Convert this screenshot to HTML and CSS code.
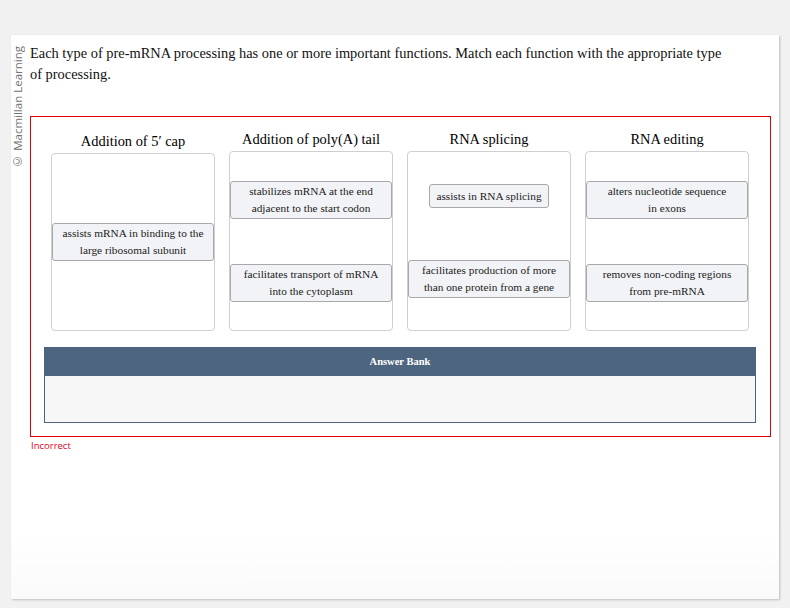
FILE: index.html
```html
<!DOCTYPE html>
<html lang="en">
<head>
<meta charset="utf-8">
<title>Pre-mRNA processing</title>
<link rel="stylesheet" href="styles.css">
</head>
<body>
<div class="page">
  <div class="panel">
    <div class="side"><span class="credit">© Macmillan Learning</span></div>
    <div class="main">
      <p class="question">Each type of pre-mRNA processing has one or more important functions. Match each function with the appropriate type of processing.</p>
      <div class="answer-area">
        <div class="cols">
          <div class="col">
            <div class="col-title col-title--tall">Addition of 5′ cap</div>
            <div class="box">
              <div class="card">assists mRNA in binding to the<br>large ribosomal subunit</div>
            </div>
          </div>
          <div class="col">
            <div class="col-title">Addition of poly(A) tail</div>
            <div class="box box--two">
              <div class="card">stabilizes mRNA at the end<br>adjacent to the start codon</div>
              <div class="card">facilitates transport of mRNA<br>into the cytoplasm</div>
            </div>
          </div>
          <div class="col">
            <div class="col-title">RNA splicing</div>
            <div class="box box--wide">
              <div class="card card--fit">assists in RNA splicing</div>
              <div class="card">facilitates production of more<br>than one protein from a gene</div>
            </div>
          </div>
          <div class="col">
            <div class="col-title">RNA editing</div>
            <div class="box box--two">
              <div class="card">alters nucleotide sequence<br>in exons</div>
              <div class="card">removes non-coding regions<br>from pre-mRNA</div>
            </div>
          </div>
        </div>
        <div class="bank">
          <div class="bank-head">Answer Bank</div>
          <div class="bank-body"></div>
        </div>
      </div>
      <div class="status">Incorrect</div>
    </div>
  </div>
</div>
</body>
</html>
```
FILE: styles.css
```css
html, body {
  margin: 0;
  padding: 0;
}
body {
  background: #f1f1f1;
  width: 790px;
  height: 608px;
  overflow: hidden;
}
.page {
  padding: 35px 11px 0 11px;
}
.panel {
  display: flex;
  height: 564px;
  background: linear-gradient(to bottom, #ffffff 88%, #fafafa 100%);
  box-shadow: 1px 1px 2px rgba(0, 0, 0, 0.22);
}
.side {
  width: 19px;
  flex: none;
  display: flex;
  flex-direction: column;
  align-items: flex-start;
}
.credit {
  writing-mode: vertical-rl;
  transform: rotate(180deg);
  font-family: "Open Sans", "DejaVu Sans", sans-serif;
  font-size: 11.5px;
  line-height: 12px;
  color: #707070;
  margin-top: 11px;
  margin-left: 1px;
  white-space: nowrap;
}
.main {
  flex: 1;
  padding-right: 8px;
  font-family: "Liberation Serif", "Times New Roman", serif;
  color: #111;
}
.question {
  margin: 8px 0 0 0;
  font-size: 14.4px;
  line-height: 21px;
  width: 700px;
}
.answer-area {
  margin-top: 31px;
  border: 1px solid #e30000;
  padding: 12px 14px 13px 13px;
}
.cols {
  display: grid;
  grid-template-columns: repeat(4, 1fr);
  grid-auto-rows: 202px;
  column-gap: 14px;
  margin: 0 7px;
}
.col {
  display: flex;
  flex-direction: column;
}
.col-title {
  font-size: 14.4px;
  line-height: 20px;
  text-align: center;
  color: #000;
  margin-bottom: 2px;
}
.col-title--tall {
  padding-top: 2px;
}
.box {
  flex: 1;
  border: 1px solid #cfcfcf;
  border-radius: 4px;
  display: flex;
  flex-direction: column;
  justify-content: center;
}
.box--two {
  gap: 45px;
}
.box--wide {
  gap: 52px;
}
.card {
  border: 1px solid #a8a8a8;
  border-radius: 3px;
  background: #f2f3f6;
  font-size: 11.3px;
  line-height: 17px;
  padding: 1px 4px;
  text-align: center;
  color: #1c1c1c;
}
.card--fit {
  align-self: center;
  padding: 3px 6px 2px;
}
.bank {
  margin-top: 16px;
}
.bank-head {
  background: #4e6580;
  color: #fff;
  font-weight: bold;
  font-size: 10.5px;
  line-height: 29px;
  text-align: center;
}
.bank-body {
  height: 46px;
  background: #f7f7f7;
  border: 1px solid #4e6580;
  border-top: none;
}
.status {
  margin-top: 2px;
  padding-left: 1px;
  font-family: "Open Sans", "DejaVu Sans", sans-serif;
  font-size: 9.5px;
  color: #e3001b;
}
```
